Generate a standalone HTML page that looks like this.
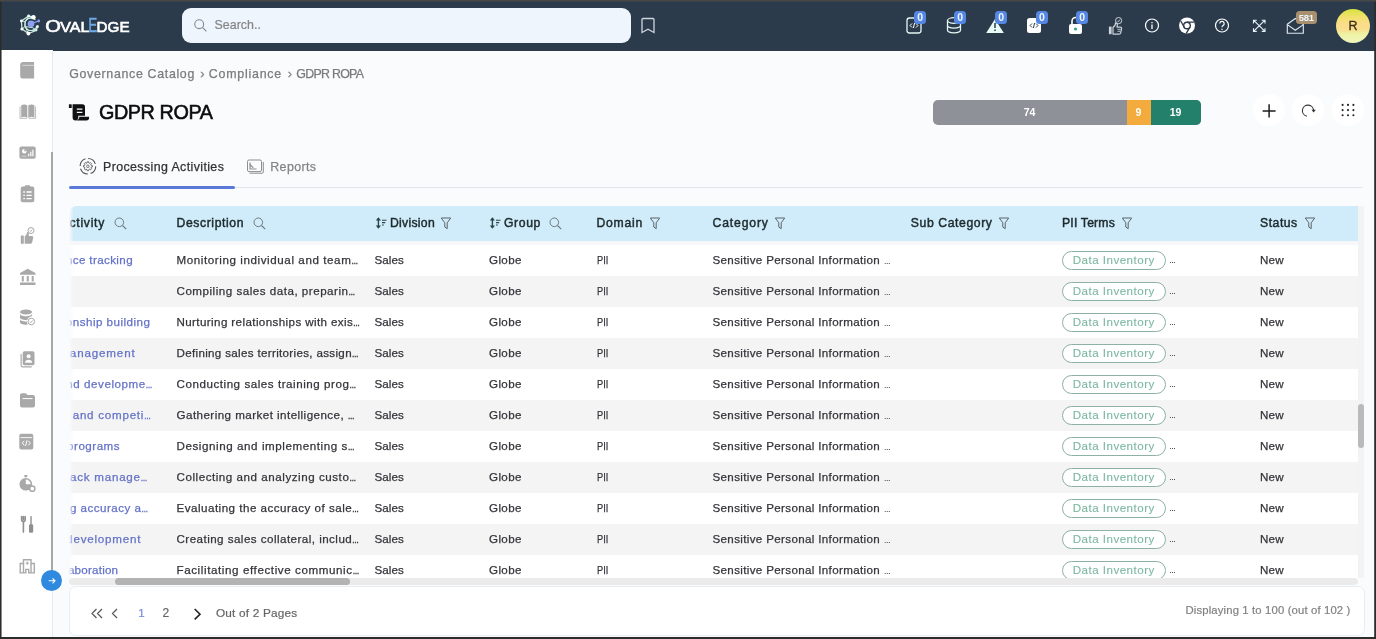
<!DOCTYPE html>
<html lang="en"><head><meta charset="utf-8"><title>GDPR ROPA</title>
<style>
*{box-sizing:border-box;margin:0;padding:0}
html,body{width:1376px;height:639px;overflow:hidden;background:#f9fbfd}
body{font-family:"Liberation Sans",sans-serif;color:#333;font-size:12px}
#app{position:relative;width:1376px;height:639px;overflow:hidden;will-change:transform;opacity:.999}
.frame{position:absolute;left:0;top:0;width:1376px;height:639px;pointer-events:none;z-index:50;box-shadow:inset 1px 0 0 #2c2c2c,inset 2px 0 0 rgba(44,44,44,.55),inset -1px 0 0 #2c2c2c,inset -2px 0 0 rgba(44,44,44,.8),inset 0 -2px 0 #2c2c2c}
.ftop{position:absolute;left:0;top:0;width:1376px;height:2px;background:linear-gradient(#474747 50%,rgba(71,71,71,.5) 50%);z-index:51}
/* header */
.hdr{position:absolute;left:0;top:0;width:1376px;height:50.500px;background:#2b3b4c}
.logo-t{position:absolute;left:45.500px;top:13px;color:#fff;font-size:19.500px;line-height:22px;white-space:nowrap;font-weight:bold}
.logo-t small{font-size:16.500px}
.logo-t b{color:#6aa6e8;font-size:20.500px}
.search{position:absolute;left:182px;top:7.500px;width:449px;height:35px;background:#eef5fc;border-radius:9px}
.ph{-webkit-text-stroke:.2px #858585;position:absolute;left:32.500px;top:10.800px;color:#858585;line-height:15px;white-space:nowrap}
.hi{position:absolute;top:14px;width:22px;height:22px}
.bdg{position:absolute;top:10.900px;width:12.300px;height:13.300px;border-radius:3.500px;background:#5586e4;color:#eef6ff;font-size:10.500px;font-weight:bold;line-height:13.300px;text-align:center}
.avatar{position:absolute;left:1336px;top:8.500px;width:34px;height:34px;border-radius:50%;background:linear-gradient(180deg,#d6e33e 0%,#f0e16a 22%,#fcdc8a 45%,#f9e08f 62%,#edf2a6 74%,#f1f6bd 100%);color:#3a2f1a;font-size:12.500px;line-height:34px;text-align:center;-webkit-text-stroke:.3px #3a2f1a}
/* sidebar */
.side{position:absolute;left:0;top:50px;width:52.500px;height:589px;background:#fff;border-right:1px solid #e6eaee}
.sline{position:absolute;left:51.300px;top:152px;width:2px;height:420px;background:#a6a6a6}
.si{position:absolute;left:18px;width:18px;height:18px}
/* top */
.crumb{-webkit-text-stroke:.25px #7b7b7b;position:absolute;left:69.250px;top:66.800px;color:#7b7b7b;white-space:nowrap;line-height:15px;width:300px;height:15px}
.crumb .sep{position:absolute;top:-1px;font-style:normal;font-size:13px;color:#8a8a8a}
.title{position:absolute;left:98.900px;top:98px;color:#0c0c0c;white-space:nowrap;line-height:28px;-webkit-text-stroke:0.550px #0c0c0c}
.prog{position:absolute;left:932.500px;top:100px;width:268.500px;height:25.400px;border-radius:5px;overflow:hidden;background:#8e9198}
.prog span{position:absolute;top:0;height:25.400px;color:#fff;font-size:10.500px;font-weight:bold;line-height:25.400px;text-align:center}
.cb{position:absolute;top:93.600px;width:32px;height:32px;line-height:0;border-radius:50%;background:#fff}
.tab{-webkit-text-stroke:.25px currentColor;position:absolute;top:158.700px;white-space:nowrap;line-height:17px}
.tabline{position:absolute;left:69px;top:187px;width:1294px;height:1px;background:#e3e6e9}
.tabul{position:absolute;left:69px;top:185.500px;width:166px;height:3.500px;background:#5b79d9;border-radius:2px}
/* table */
.thead{position:absolute;left:69px;top:206.200px;width:1289px;height:34.800px;background:#d0ebf9;overflow:hidden;border-radius:8px 0 0 0}
.th{position:absolute;top:8.700px;font-size:12.200px;font-weight:normal;-webkit-text-stroke:0.450px #1c2a2c;color:#1c2a2c;white-space:nowrap;line-height:16px}
.thi{position:absolute;top:11px;line-height:0}
.tbody{position:absolute;left:69px;top:241px;width:1289px;height:344px;overflow:hidden;background:#f6f7fa}
.row{position:absolute;left:0;width:1289px;height:31px;margin-top:-241px}
.row.odd{background:#fff}
.row.even{background:#f4f4f4}
.c{position:absolute;top:8px;font-size:11.600px;line-height:14px;color:#34343a;white-space:pre;-webkit-text-stroke:.25px currentColor}
.lnk{color:#6472c8}
.pill{position:absolute;left:992.500px;top:6.500px;width:104.500px;height:18.500px;border:1px solid #8db1a6;border-radius:10px;color:#7cb8a1;font-size:11.600px;line-height:16.500px;-webkit-text-stroke:.1px #7cb8a1;text-align:center;background:#fff;white-space:nowrap}
.fade{position:absolute;left:66px;top:200px;width:8px;height:386px;background:linear-gradient(90deg,#f9fbfd 35%,rgba(249,251,253,0))}
.vscroll{position:absolute;left:1358px;top:206px;width:6px;height:372px;background:#f2f3f5}
.vthumb{position:absolute;left:.2px;top:198px;width:5.600px;height:43.500px;background:#bababa;border-radius:3px}
.hscroll{position:absolute;left:69px;top:578px;width:1289px;height:7px;background:#ebebeb;border-radius:4px}
.hthumb{position:absolute;left:46px;top:0;width:235px;height:6.500px;background:#b3b3b3;border-radius:4px}
.pager{position:absolute;left:68.500px;top:586px;width:1296px;height:50px;background:#fff;border:1px solid #e9edf0;border-radius:7px}
.pg{-webkit-text-stroke:.2px currentColor;position:absolute;top:19px;font-size:12px;color:#666;line-height:15px;white-space:nowrap}
.disp{-webkit-text-stroke:.2px #818181;position:absolute;right:13px;top:15.700px;color:#818181;white-space:nowrap;line-height:15px}
.fab{position:absolute;left:40.500px;top:569.500px;width:21.500px;height:21.500px;border-radius:50%;background:#2f8adf;line-height:0}
.el{position:absolute;top:13.500px;font-size:6.500px;font-weight:bold;line-height:8px;color:#444}
.eli{font-size:6.500px;font-weight:bold;letter-spacing:0}

</style></head><body>
<div id="app">
<div class="hdr">
  <svg style="position:absolute;left:0;top:0" width="140" height="50" viewBox="0 0 140 50">
    <g fill="none" stroke="#c9ece2" stroke-linejoin="round">
      <path d="M33.400 17.300L28.600 16 21.400 21 22 29l6.400 4.500 8-3.200 1-3.700" stroke-width="1.300"/>
      <path d="M28.600 16l-3.200 5.500-.3 5 3.300 7M21.400 21l4 .500M22 29l3.100-2.500M25.400 21.500l3-2.800 5-1.400M25.100 26.500l3.300 4 8-.2-3.500-2.500z" stroke-width="1"/>
      <path d="M35.500 19.800a6.300 6.300 0 1 0 1 7.400" stroke-width="1.200"/>
    </g>
    <path d="M31 23.700l7.700-2.700" stroke="#8ea2f4" stroke-width="1.300"/>
    <circle cx="31" cy="23.800" r="3.400" fill="#8ea2f4"/>
    <circle cx="38.700" cy="21" r="1.400" fill="#8ea2f4"/>
    <circle cx="33.400" cy="17.300" r="2.300" fill="#fff"/>
    <circle cx="28.600" cy="16" r="1.400" fill="#f2fffb"/>
    <circle cx="21.400" cy="21" r="1.400" fill="#fff"/>
    <circle cx="22" cy="29" r="1.600" fill="#fff"/>
    <circle cx="28.400" cy="33.500" r="1.900" fill="#fff"/>
    <circle cx="37.400" cy="26.600" r="1.500" fill="#e6fbf5"/>
    <circle cx="36.400" cy="30.300" r="1" fill="#e6fbf5"/>
    <g font-family="Liberation Sans, sans-serif" fill="#fff" stroke="#fff" stroke-width=".650">
      <text x="45.300" y="31.700" font-size="17.400" textLength="15.600" lengthAdjust="spacingAndGlyphs">O</text>
      <text x="60.300" y="31.600" font-size="15.400" textLength="29" lengthAdjust="spacingAndGlyphs">VAL</text>
      <text x="88.600" y="31.600" font-size="19.800" textLength="8.600" lengthAdjust="spacingAndGlyphs" fill="#6fa8e6" stroke="#6fa8e6">E</text>
      <text x="96.600" y="31.600" font-size="15.400" textLength="33" lengthAdjust="spacingAndGlyphs">DGE</text>
    </g>
  </svg>
  <div class="search">
    <svg style="position:absolute;left:11.500px;top:11.800px" width="13" height="13" viewBox="0 0 13 13"><circle cx="5.200" cy="5.200" r="4.400" fill="none" stroke="#858a8f" stroke-width="1.100"/><path d="M8.400 8.400l4 4" stroke="#858a8f" stroke-width="1.200"/></svg>
    <span class="ph"><span style="font-size:12.4px;letter-spacing:0.043px;">Search..</span></span>
  </div>
  <svg style="position:absolute;left:641px;top:17px" width="14" height="17" viewBox="0 0 14 17"><path d="M2 1.500h10a1 1 0 0 1 1 1V15.500l-6-3.200-6 3.200V2.500a1 1 0 0 1 1-1z" fill="none" stroke="#cdd6dd" stroke-width="1.300"/></svg>
  <!-- right icons -->
  <svg class="hi" style="left:904px" viewBox="0 0 22 22"><rect x="3" y="4" width="14" height="15" rx="2.500" fill="none" stroke="#e4f7f2" stroke-width="1.300"/><path d="M8 9.500l-2 2 2 2M12 9.500l2 2-2 2M10.600 9l-1.200 5" fill="none" stroke="#fff" stroke-width="1"/></svg>
  <span class="bdg" style="left:914px">0</span>
  <svg class="hi" style="left:944px" viewBox="0 0 22 22"><ellipse cx="10" cy="6.500" rx="6.500" ry="2.800" fill="none" stroke="#e4f7f2" stroke-width="1.300"/><path d="M3.500 6.500v9.500c0 1.600 2.900 2.800 6.500 2.800s6.500-1.200 6.500-2.800V6.500M3.500 11.300c0 1.600 2.900 2.800 6.500 2.800s6.500-1.200 6.500-2.800" fill="none" stroke="#e4f7f2" stroke-width="1.300"/></svg>
  <span class="bdg" style="left:954px">0</span>
  <svg class="hi" style="left:984px" viewBox="0 0 22 22"><path d="M11 5L19.800 19H2.200z" fill="#e9fbf6"/><path d="M11 9v5M11 15.500v1.500" stroke="#2b3b4c" stroke-width="1.500"/></svg>
  <span class="bdg" style="left:995px">0</span>
  <svg class="hi" style="left:1024px" viewBox="0 0 22 22"><rect x="3" y="4" width="14" height="15" rx="2.500" fill="#fff"/><path d="M8 9.500l-2 2 2 2M12 9.500l2 2-2 2M10.600 9l-1.200 5" fill="none" stroke="#2b3b4c" stroke-width="1"/></svg>
  <span class="bdg" style="left:1035.700px">0</span>
  <svg class="hi" style="left:1065px" viewBox="0 0 22 22"><rect x="4" y="10" width="13" height="10" rx="2" fill="#fff"/><path d="M7 10V7a3.500 3.500 0 0 1 7 0" fill="none" stroke="#fff" stroke-width="1.600"/><circle cx="10.500" cy="15" r="1.600" fill="#3aa58a"/></svg>
  <span class="bdg" style="left:1076px">0</span>
  <svg class="hi" style="left:1105px" viewBox="0 0 22 22"><rect x="3.900" y="12.600" width="2.700" height="7.600" fill="#ccd3d9"/><path d="M8 13.300c1.700-.9 2.500-2.500 2.500-4.400 1.300 0 2 1 1.800 2.400l-.3 1.800h3.400c.9 0 1.400.7 1.200 1.500l-.9 4.200c-.2.800-.8 1.300-1.600 1.300H8z" fill="none" stroke="#ccd3d9" stroke-width="1.200" stroke-linejoin="round"/><path d="M12.500 15.300h3.200M12.500 17.300h2.800" stroke="#ccd3d9" stroke-width=".900" fill="none"/><circle cx="13.600" cy="6.600" r="3.100" fill="#2b3b4c" stroke="#ccd3d9" stroke-width="1"/><path d="M12.300 6.700l1 1 1.600-2" fill="none" stroke="#ccd3d9" stroke-width="1"/></svg>
  <svg class="hi" style="left:1141px" viewBox="0 0 22 22"><circle cx="11" cy="11.500" r="6.500" fill="none" stroke="#fff" stroke-width="1.200"/><path d="M11 10.500v4.500M11 8v1.200" stroke="#fff" stroke-width="1.300"/></svg>
  <svg class="hi" style="left:1176px" viewBox="0 0 22 22"><circle cx="11" cy="11.500" r="8" fill="#fff"/><circle cx="11" cy="11.500" r="3.300" fill="#fff" stroke="#2b3b4c" stroke-width="1.400"/><path d="M11 8.200h7.200M8.200 13.200L4.600 6.800M13.900 13.200l-3.600 6.200" stroke="#2b3b4c" stroke-width="1.300"/></svg>
  <svg class="hi" style="left:1211px" viewBox="0 0 22 22"><circle cx="11" cy="11.500" r="6.500" fill="none" stroke="#fff" stroke-width="1.200"/><path d="M8.800 9.600a2.200 2.200 0 1 1 3.200 2c-.7.400-1 .8-1 1.600M11 14.800v1.200" fill="none" stroke="#fff" stroke-width="1.200"/></svg>
  <svg class="hi" style="left:1248px" viewBox="0 0 22 22"><path d="M5.500 6.200l11.500 11.200M17 6.200L5.500 17.400M5.500 9.400V6.200h3.300M13.700 6.200H17v3.200M17 14.200v3.200h-3.300M8.800 17.400H5.500v-3.200" fill="none" stroke="#e3f0f4" stroke-width="1.150"/></svg>
  <svg class="hi" style="left:1284px" viewBox="0 0 22 22"><path d="M3.300 10.300l8-5.800 8 5.800v8.900h-16z" fill="none" stroke="#dfe8ee" stroke-width="1.150"/><path d="M3.300 10.600l8 5.600 8-5.600" fill="none" stroke="#dfe8ee" stroke-width="1.150"/></svg>
  <span class="bdg" style="left:1295.500px;background:#a8906f;width:21.500px;font-size:9.500px;letter-spacing:-.3px">581</span>
  <div class="avatar">R</div>
</div>

<div class="side"></div>
<svg style="position:absolute;left:0;top:50px" width="52" height="589" viewBox="0 50 52 589">
<g fill="#a9a9a9" stroke="none">
  <!-- 1 closed book -->
  <path d="M20.200 65a2.900 2.900 0 0 1 2.900-2.900H34.100V78.600H22.700a2.500 2.500 0 0 1-2.500-2.500z"/>
  <path d="M22.500 65.300H34.100" stroke="#e4e4e4" stroke-width=".800" fill="none"/>
  <!-- 2 open book -->
  <path d="M21.200 105.300c2.100-1.200 4.400-1.100 6.100.3v12.300c-1.700-1.300-4-1.400-6.100-.4zM34.400 105.300c-2.100-1.200-4.400-1.100-6.100.3v12.300c1.700-1.300 4-1.400 6.100-.4z"/>
  <path d="M20 106.500v11.800h6.800M35.600 106.500v11.800h-6.800" fill="none" stroke="#a9a9a9" stroke-width=".800"/>
  <!-- 3 dashboard -->
  <rect x="19.400" y="146.500" width="16.300" height="12.300" rx="2"/>
  <circle cx="24.300" cy="151.200" r="2.300" fill="#fff"/>
  <path d="M24.300 151.200v-2.300a2.300 2.300 0 0 1 2.300 2.300z" fill="#a9a9a9"/>
  <path d="M28.700 156.200v-2.500M30.800 156.200v-4.500M32.900 156.200v-6.500" stroke="#fff" stroke-width="1.200" fill="none"/>
  <path d="M21.500 156.200h5" stroke="#d9d9d9" stroke-width=".800" fill="none"/>
  <!-- 4 clipboard -->
  <rect x="20.700" y="186.600" width="13.600" height="15.600" rx="2"/>
  <rect x="24.700" y="185.200" width="5.600" height="3.200" rx="1.200"/>
  <path d="M23.300 192h1.600M26.500 192h5.200M23.300 195.300h1.600M26.500 195.300h5.200M23.300 198.600h1.600M26.500 198.600h5.200" stroke="#fff" stroke-width="1.300" fill="none"/>
  <!-- 5 thumb + check -->
  <rect x="20.800" y="235.400" width="3" height="8.300" rx=".500"/>
  <path d="M24.700 236.200c1.500-.8 2.300-2.300 2.300-4.200 1.400 0 2.100 1.100 1.900 2.600l-.2 1.300h3.300c.9 0 1.400.8 1.200 1.600l-1 4.800c-.2.800-.8 1.400-1.600 1.400h-5.900z"/>
  <circle cx="31" cy="230.500" r="3" fill="#fff" stroke="#a9a9a9" stroke-width="1"/>
  <path d="M29.700 230.500l1 1 1.600-1.900" fill="none" stroke="#a9a9a9" stroke-width=".900"/>
  <!-- 6 bank -->
  <path d="M27.750 268.700l7.750 4.300v1.700H20v-1.700zM21.800 276h2v5.500h-2zM26.750 276h2v5.500h-2zM31.700 276h2v5.500h-2zM20 282.600h15.500V285H20z"/>
  <!-- 7 db + check -->
  <ellipse cx="26" cy="312" rx="6" ry="2.500"/>
  <path d="M20 313.700c0 1.400 2.700 2.500 6 2.500s6-1.100 6-2.500v2.600c-2.300.2-4.100 1.600-4.800 3.600-.4 0-.8.100-1.200.1-3.300 0-6-1.100-6-2.500zM20 318.900c0 1.400 2.700 2.500 6 2.500h.9c0 1.200.4 2.300 1.100 3.200-.6.100-1.300.1-2 .1-3.300 0-6-1.100-6-2.500z"/>
  <circle cx="31.300" cy="321.500" r="3.300" fill="#fff" stroke="#a9a9a9" stroke-width="1"/>
  <path d="M29.800 321.500l1.100 1.100 1.800-2.100" fill="none" stroke="#a9a9a9" stroke-width="1"/>
  <!-- 8 contact -->
  <path d="M21.100 354v11.200c0 .9.700 1.600 1.600 1.600h9" fill="none" stroke="#a9a9a9" stroke-width="1.200"/>
  <rect x="22.700" y="351.300" width="11.800" height="14" rx="1.800"/>
  <circle cx="28.600" cy="356.200" r="2" fill="#fff"/>
  <path d="M25 362.800c0-2 1.600-3 3.600-3s3.600 1 3.600 3z" fill="#fff"/>
  <!-- 9 folder -->
  <path d="M20 395.200c0-1.100.9-2 2-2h3.800l1.700 1.900H33c1.100 0 2 .9 2 2v8.400c0 1.100-.9 2-2 2H22c-1.100 0-2-.9-2-2z"/>
  <path d="M22.500 398.600h10" stroke="#fff" stroke-width="1" fill="none"/>
  <!-- 10 code window -->
  <rect x="19.300" y="433.800" width="14" height="15.600" rx="2"/>
  <path d="M20.500 437.600h11.600" stroke="#fff" stroke-width=".900" fill="none"/>
  <path d="M24.300 440.800l-2 2.300 2 2.300M28.300 440.800l2 2.300-2 2.300M27 440.300l-1.500 5.600" fill="none" stroke="#fff" stroke-width="1"/>
  <!-- 11 stopwatch + gear -->
  <circle cx="25.800" cy="484.300" r="6.300"/>
  <rect x="24.300" y="475" width="3" height="2.200" rx=".600"/>
  <path d="M25.800 484.300v-4.800a4.800 4.800 0 0 1 4.800 4.800z" fill="#fff"/>
  <circle cx="32.300" cy="488.700" r="2.600" fill="#fff" stroke="#a9a9a9" stroke-width="1.500"/>
  <!-- 12 tools -->
  <path d="M23.400 516.600v3.200M21.600 516.600v3c0 1.200.8 2 1.800 2s1.800-.8 1.800-2v-3M23.400 521.600v10.500" fill="none" stroke="#8f8f8f" stroke-width="1.600" stroke-linecap="round"/>
  <path d="M31 516.600v8" stroke="#8f8f8f" stroke-width="1.400" fill="none" stroke-linecap="round"/>
  <rect x="29" y="524.300" width="4.200" height="8.400" rx="1.300" fill="#8f8f8f"/>
  <!-- 13 hospital -->
  <path d="M20.200 563.500h3.300v9.400h-3.300zM31 563.500h3.300v9.400H31zM23.500 559.700h7.500v13.200h-2.300v-3.500h-2.900v3.500h-2.300z" fill="none" stroke="#a9a9a9" stroke-width="1.400"/>
  <path d="M27.250 561.600v3.200M25.650 563.200h3.200" stroke="#a9a9a9" stroke-width="1.100" fill="none"/>
</g>
</svg>
<div class="sline"></div>

<div class="crumb"><span style="font-size:12.4px;letter-spacing:0.672px;">Governance Catalog</span><i class="sep" style="left:131px">›</i><span style="font-size:12.4px;letter-spacing:0.781px;position:absolute;left:139.500px">Compliance</span><i class="sep" style="left:218.500px">›</i><span style="font-size:12.4px;letter-spacing:-0.715px;position:absolute;left:227px">GDPR ROPA</span></div>
<svg style="position:absolute;left:60px;top:100px" width="34" height="24" viewBox="60 100 34 24"><path d="M68.900 104.300h2.800v3.700h-2.800z" fill="#111"/><path d="M72.600 104.300H82.400a2.600 2.600 0 0 1 2.600 2.600V115.700H78.300v1.900a2.850 2.850 0 0 1-5.700 0z" fill="#111"/><path d="M79.300 116.700H89.100v1a2.700 2.700 0 0 1-2.700 2.700H76.200c1.900-.3 3.100-1.500 3.100-3.700z" fill="#111"/><path d="M76.800 109.200h5.600M76.800 112.300h5.600" stroke="#f9fbfd" stroke-width="1.300" fill="none"/></svg>
<div class="title"><span style="font-size:19.8px;letter-spacing:-0.394px;">GDPR ROPA</span></div>
<div class="prog"><span style="left:0;width:194px">74</span><span style="left:194px;width:24px;background:#f2ab3c">9</span><span style="left:218px;width:50px;background:#23806a">19</span></div>
<div class="cb" style="left:1252.900px"><svg width="32" height="32" viewBox="0 0 32 32"><path d="M16.100 10.300v13.200M9.600 16.900h13" stroke="#1d1d1d" stroke-width="1.500"/></svg></div>
<div class="cb" style="left:1292.400px"><svg width="32" height="32" viewBox="0 0 32 32"><path d="M14.900 22.200A5.600 5.600 0 1 1 21.600 16.600" fill="none" stroke="#333" stroke-width="1.100"/><path d="M19.500 15.700h4.300l-2.200 2.800z" fill="#333"/></svg></div>
<div class="cb" style="left:1332.200px"><svg width="32" height="32" viewBox="0 0 32 32"><g fill="#222"><circle cx="10.600" cy="10.900" r="1.050"/><circle cx="16" cy="10.900" r="1.050"/><circle cx="21.400" cy="10.900" r="1.050"/><circle cx="10.600" cy="16.100" r="1.050"/><circle cx="16" cy="16.100" r="1.050"/><circle cx="21.400" cy="16.100" r="1.050"/><circle cx="10.600" cy="21.300" r="1.050"/><circle cx="16" cy="21.300" r="1.050"/><circle cx="21.400" cy="21.300" r="1.050"/></g></svg></div>
<svg style="position:absolute;left:78px;top:156px" width="20" height="20" viewBox="78 156 20 20"><circle cx="87.900" cy="166.250" r="7.800" fill="none" stroke="#555" stroke-width="1.100" stroke-dasharray="9.500 2.750"/><path d="M87.20 161.81L88.60 161.81L88.72 162.85L89.73 163.27L90.55 162.61L91.54 163.60L90.88 164.42L91.30 165.43L92.34 165.55L92.34 166.95L91.30 167.07L90.88 168.08L91.54 168.90L90.55 169.89L89.73 169.23L88.72 169.65L88.60 170.69L87.20 170.69L87.08 169.65L86.07 169.23L85.25 169.89L84.26 168.90L84.92 168.08L84.50 167.07L83.46 166.95L83.46 165.55L84.50 165.43L84.92 164.42L84.26 163.60L85.25 162.61L86.07 163.27L87.08 162.85z" fill="none" stroke="#5a5a5a" stroke-width=".900" stroke-linejoin="round"/><circle cx="87.900" cy="166.250" r="1.300" fill="none" stroke="#5a5a5a" stroke-width=".800"/></svg>
<div class="tab" style="left:103px;color:#333"><span style="font-size:12.4px;letter-spacing:0.396px;">Processing Activities</span></div>
<svg style="position:absolute;left:246px;top:158px" width="19" height="17" viewBox="246 158 19 17"><path d="M249.500 173.200h12.500a1.300 1.300 0 0 0 1.300-1.300V162" fill="none" stroke="#8d8d8d" stroke-width="1"/><rect x="247.500" y="160" width="14" height="11.600" rx="1.500" fill="#fbfcfd" stroke="#8d8d8d" stroke-width="1"/><path d="M250 162.500v6.500h6.500M250 164.500l3.300 3.300" fill="none" stroke="#8d8d8d" stroke-width="1.200"/></svg>
<div class="tab" style="left:270.300px;color:#848484"><span style="font-size:12.4px;letter-spacing:0.373px;">Reports</span></div>
<div class="tabline"></div>
<div class="tabul"></div>

<div class="thead"><span class="th" style="left:0.5px;letter-spacing:0.719px">ctivity</span><span class="thi" style="left:44.5px"><svg width="13" height="13" viewBox="0 0 13 13"><circle cx="5.300" cy="5.300" r="4.300" fill="none" stroke="#6d7a80" stroke-width="1"/><path d="M8.500 8.500l3.700 3.700" stroke="#6d7a80" stroke-width="1.100"/></svg></span><span class="th" style="left:107.5px;letter-spacing:0.603px">Description</span><span class="thi" style="left:183.5px"><svg width="13" height="13" viewBox="0 0 13 13"><circle cx="5.300" cy="5.300" r="4.300" fill="none" stroke="#6d7a80" stroke-width="1"/><path d="M8.500 8.500l3.700 3.700" stroke="#6d7a80" stroke-width="1.100"/></svg></span><span class="thi" style="left:306.3px"><svg width="12" height="12" viewBox="0 0 12 12"><path d="M3.400 1.200v9.600" fill="none" stroke="#2c4548" stroke-width="1.400"/><path d="M3.400 .2L6 3.400H.8zM3.400 11.800L6 8.600H.8z" fill="#2c4548"/><path d="M7 3.200h4.500M7 5.600h3.200M7 8h1.800" stroke="#2c4548" stroke-width="1.100"/></svg></span><span class="th" style="left:321.0px;letter-spacing:0.291px">Division</span><span class="thi" style="left:372.0px"><svg width="11" height="13" viewBox="0 0 11 13"><path d="M.3 1h9.400L6.200 5.800v5.900L3.800 10V5.800z" fill="none" stroke="#5a6468" stroke-width="1" stroke-linejoin="round"/></svg></span><span class="thi" style="left:420.3px"><svg width="12" height="12" viewBox="0 0 12 12"><path d="M3.400 1.200v9.600" fill="none" stroke="#2c4548" stroke-width="1.400"/><path d="M3.400 .2L6 3.400H.8zM3.400 11.800L6 8.600H.8z" fill="#2c4548"/><path d="M7 3.200h4.500M7 5.600h3.200M7 8h1.800" stroke="#2c4548" stroke-width="1.100"/></svg></span><span class="th" style="left:435.0px;letter-spacing:0.625px">Group</span><span class="thi" style="left:480.0px"><svg width="13" height="13" viewBox="0 0 13 13"><circle cx="5.300" cy="5.300" r="4.300" fill="none" stroke="#6d7a80" stroke-width="1"/><path d="M8.500 8.500l3.700 3.700" stroke="#6d7a80" stroke-width="1.100"/></svg></span><span class="th" style="left:527.5px;letter-spacing:0.75px">Domain</span><span class="thi" style="left:581.0px"><svg width="11" height="13" viewBox="0 0 11 13"><path d="M.3 1h9.400L6.200 5.800v5.900L3.800 10V5.800z" fill="none" stroke="#5a6468" stroke-width="1" stroke-linejoin="round"/></svg></span><span class="th" style="left:643.5px;letter-spacing:0.85px">Category</span><span class="thi" style="left:706.0px"><svg width="11" height="13" viewBox="0 0 11 13"><path d="M.3 1h9.400L6.200 5.800v5.900L3.800 10V5.800z" fill="none" stroke="#5a6468" stroke-width="1" stroke-linejoin="round"/></svg></span><span class="th" style="left:841.8px;letter-spacing:0.602px">Sub Category</span><span class="thi" style="left:930.0px"><svg width="11" height="13" viewBox="0 0 11 13"><path d="M.3 1h9.400L6.200 5.800v5.900L3.800 10V5.800z" fill="none" stroke="#5a6468" stroke-width="1" stroke-linejoin="round"/></svg></span><span class="th" style="left:993.0px;letter-spacing:0.194px">PII Terms</span><span class="thi" style="left:1053.0px"><svg width="11" height="13" viewBox="0 0 11 13"><path d="M.3 1h9.400L6.200 5.800v5.900L3.800 10V5.800z" fill="none" stroke="#5a6468" stroke-width="1" stroke-linejoin="round"/></svg></span><span class="th" style="left:1191.0px;letter-spacing:0.531px">Status</span><span class="thi" style="left:1235.5px"><svg width="11" height="13" viewBox="0 0 11 13"><path d="M.3 1h9.400L6.200 5.800v5.900L3.800 10V5.800z" fill="none" stroke="#5a6468" stroke-width="1" stroke-linejoin="round"/></svg></span></div>
<div class="tbody">
<div class="row odd" style="top:244.5px"><span class="c lnk" style="left:-9.9px;letter-spacing:0.376px">ance tracking</span><span class="c" style="left:107.5px;letter-spacing:0.588px;">Monitoring individual and team<span class="eli">…</span></span><span class="c" style="left:305.5px;letter-spacing:0.047px;">Sales</span><span class="c" style="left:420.0px;letter-spacing:0.362px;">Globe</span><span class="c" style="left:527.5px;transform:scaleX(0.796);transform-origin:0 50%">PII</span><span class="c" style="left:643.5px;letter-spacing:0.342px;">Sensitive Personal Information</span><span class="el" style="left:815px">…</span><span class="pill" style="letter-spacing:0.471px">Data Inventory</span><span class="el" style="left:1100.300px;top:12.700px">…</span><span class="c" style="left:1191.0px;letter-spacing:0.182px;">New</span></div>
<div class="row even" style="top:275.5px"><span class="c" style="left:107.5px;letter-spacing:0.513px;">Compiling sales data, preparin<span class="eli">…</span></span><span class="c" style="left:305.5px;letter-spacing:0.047px;">Sales</span><span class="c" style="left:420.0px;letter-spacing:0.362px;">Globe</span><span class="c" style="left:527.5px;transform:scaleX(0.796);transform-origin:0 50%">PII</span><span class="c" style="left:643.5px;letter-spacing:0.342px;">Sensitive Personal Information</span><span class="el" style="left:815px">…</span><span class="pill" style="letter-spacing:0.471px">Data Inventory</span><span class="el" style="left:1100.300px;top:12.700px">…</span><span class="c" style="left:1191.0px;letter-spacing:0.182px;">New</span></div>
<div class="row odd" style="top:306.5px"><span class="c lnk" style="left:-6.2px;letter-spacing:0.478px">ionship building</span><span class="c" style="left:107.5px;letter-spacing:0.395px;">Nurturing relationships with exis<span class="eli">…</span></span><span class="c" style="left:305.5px;letter-spacing:0.047px;">Sales</span><span class="c" style="left:420.0px;letter-spacing:0.362px;">Globe</span><span class="c" style="left:527.5px;transform:scaleX(0.796);transform-origin:0 50%">PII</span><span class="c" style="left:643.5px;letter-spacing:0.342px;">Sensitive Personal Information</span><span class="el" style="left:815px">…</span><span class="pill" style="letter-spacing:0.471px">Data Inventory</span><span class="el" style="left:1100.300px;top:12.700px">…</span><span class="c" style="left:1191.0px;letter-spacing:0.182px;">New</span></div>
<div class="row even" style="top:337.5px"><span class="c lnk" style="left:-9.7px;letter-spacing:0.854px">management</span><span class="c" style="left:107.5px;letter-spacing:0.326px;">Defining sales territories, assign<span class="eli">…</span></span><span class="c" style="left:305.5px;letter-spacing:0.047px;">Sales</span><span class="c" style="left:420.0px;letter-spacing:0.362px;">Globe</span><span class="c" style="left:527.5px;transform:scaleX(0.796);transform-origin:0 50%">PII</span><span class="c" style="left:643.5px;letter-spacing:0.342px;">Sensitive Personal Information</span><span class="el" style="left:815px">…</span><span class="pill" style="letter-spacing:0.471px">Data Inventory</span><span class="el" style="left:1100.300px;top:12.700px">…</span><span class="c" style="left:1191.0px;letter-spacing:0.182px;">New</span></div>
<div class="row odd" style="top:368.5px"><span class="c lnk" style="left:-9.7px;letter-spacing:0.555px">and developme<span class="eli">…</span></span><span class="c" style="left:107.5px;letter-spacing:0.546px;">Conducting sales training prog<span class="eli">…</span></span><span class="c" style="left:305.5px;letter-spacing:0.047px;">Sales</span><span class="c" style="left:420.0px;letter-spacing:0.362px;">Globe</span><span class="c" style="left:527.5px;transform:scaleX(0.796);transform-origin:0 50%">PII</span><span class="c" style="left:643.5px;letter-spacing:0.342px;">Sensitive Personal Information</span><span class="el" style="left:815px">…</span><span class="pill" style="letter-spacing:0.471px">Data Inventory</span><span class="el" style="left:1100.300px;top:12.700px">…</span><span class="c" style="left:1191.0px;letter-spacing:0.182px;">New</span></div>
<div class="row even" style="top:399.5px"><span class="c lnk" style="left:-7.5px;letter-spacing:0.757px">e and competi<span class="eli">…</span></span><span class="c" style="left:107.5px;letter-spacing:0.456px;">Gathering market intelligence, <span class="eli">…</span></span><span class="c" style="left:305.5px;letter-spacing:0.047px;">Sales</span><span class="c" style="left:420.0px;letter-spacing:0.362px;">Globe</span><span class="c" style="left:527.5px;transform:scaleX(0.796);transform-origin:0 50%">PII</span><span class="c" style="left:643.5px;letter-spacing:0.342px;">Sensitive Personal Information</span><span class="el" style="left:815px">…</span><span class="pill" style="letter-spacing:0.471px">Data Inventory</span><span class="el" style="left:1100.300px;top:12.700px">…</span><span class="c" style="left:1191.0px;letter-spacing:0.182px;">New</span></div>
<div class="row odd" style="top:430.5px"><span class="c lnk" style="left:-1.9px;letter-spacing:0.496px">programs</span><span class="c" style="left:107.5px;letter-spacing:0.574px;">Designing and implementing s<span class="eli">…</span></span><span class="c" style="left:305.5px;letter-spacing:0.047px;">Sales</span><span class="c" style="left:420.0px;letter-spacing:0.362px;">Globe</span><span class="c" style="left:527.5px;transform:scaleX(0.796);transform-origin:0 50%">PII</span><span class="c" style="left:643.5px;letter-spacing:0.342px;">Sensitive Personal Information</span><span class="el" style="left:815px">…</span><span class="pill" style="letter-spacing:0.471px">Data Inventory</span><span class="el" style="left:1100.300px;top:12.700px">…</span><span class="c" style="left:1191.0px;letter-spacing:0.182px;">New</span></div>
<div class="row even" style="top:461.5px"><span class="c lnk" style="left:-6.3px;letter-spacing:0.773px">back manage<span class="eli">…</span></span><span class="c" style="left:107.5px;letter-spacing:0.542px;">Collecting and analyzing custo<span class="eli">…</span></span><span class="c" style="left:305.5px;letter-spacing:0.047px;">Sales</span><span class="c" style="left:420.0px;letter-spacing:0.362px;">Globe</span><span class="c" style="left:527.5px;transform:scaleX(0.796);transform-origin:0 50%">PII</span><span class="c" style="left:643.5px;letter-spacing:0.342px;">Sensitive Personal Information</span><span class="el" style="left:815px">…</span><span class="pill" style="letter-spacing:0.471px">Data Inventory</span><span class="el" style="left:1100.300px;top:12.700px">…</span><span class="c" style="left:1191.0px;letter-spacing:0.182px;">New</span></div>
<div class="row odd" style="top:492.5px"><span class="c lnk" style="left:-6.0px;letter-spacing:0.48px">ng accuracy a<span class="eli">…</span></span><span class="c" style="left:107.5px;letter-spacing:0.491px;">Evaluating the accuracy of sale<span class="eli">…</span></span><span class="c" style="left:305.5px;letter-spacing:0.047px;">Sales</span><span class="c" style="left:420.0px;letter-spacing:0.362px;">Globe</span><span class="c" style="left:527.5px;transform:scaleX(0.796);transform-origin:0 50%">PII</span><span class="c" style="left:643.5px;letter-spacing:0.342px;">Sensitive Personal Information</span><span class="el" style="left:815px">…</span><span class="pill" style="letter-spacing:0.471px">Data Inventory</span><span class="el" style="left:1100.300px;top:12.700px">…</span><span class="c" style="left:1191.0px;letter-spacing:0.182px;">New</span></div>
<div class="row even" style="top:523.5px"><span class="c lnk" style="left:-2.7px;letter-spacing:0.765px">development</span><span class="c" style="left:107.5px;letter-spacing:0.462px;">Creating sales collateral, includ<span class="eli">…</span></span><span class="c" style="left:305.5px;letter-spacing:0.047px;">Sales</span><span class="c" style="left:420.0px;letter-spacing:0.362px;">Globe</span><span class="c" style="left:527.5px;transform:scaleX(0.796);transform-origin:0 50%">PII</span><span class="c" style="left:643.5px;letter-spacing:0.342px;">Sensitive Personal Information</span><span class="el" style="left:815px">…</span><span class="pill" style="letter-spacing:0.471px">Data Inventory</span><span class="el" style="left:1100.300px;top:12.700px">…</span><span class="c" style="left:1191.0px;letter-spacing:0.182px;">New</span></div>
<div class="row odd" style="top:554.5px"><span class="c lnk" style="left:-6.7px;letter-spacing:0.224px">llaboration</span><span class="c" style="left:107.5px;letter-spacing:0.598px;">Facilitating effective communic<span class="eli">…</span></span><span class="c" style="left:305.5px;letter-spacing:0.047px;">Sales</span><span class="c" style="left:420.0px;letter-spacing:0.362px;">Globe</span><span class="c" style="left:527.5px;transform:scaleX(0.796);transform-origin:0 50%">PII</span><span class="c" style="left:643.5px;letter-spacing:0.342px;">Sensitive Personal Information</span><span class="el" style="left:815px">…</span><span class="pill" style="letter-spacing:0.471px">Data Inventory</span><span class="el" style="left:1100.300px;top:12.700px">…</span><span class="c" style="left:1191.0px;letter-spacing:0.182px;">New</span></div>

</div>
<div class="fade"></div>
<div class="vscroll"><div class="vthumb"></div></div>
<div class="hscroll"><div class="hthumb"></div></div>
<div class="pager">
  <svg style="position:absolute;left:21px;top:21.200px" width="28" height="11" viewBox="0 0 28 11"><path d="M5.500 1L1 5.500 5.500 10M11 1L6.500 5.500 11 10M26 1l-4.500 4.500L26 10" fill="none" stroke="#555" stroke-width="1.200"/></svg>
  <span class="pg" style="left:68.800px;color:#7a88d6;font-size:11.500px">1</span>
  <span class="pg" style="left:93px">2</span>
  <svg style="position:absolute;left:122px;top:20px" width="10" height="14" viewBox="0 0 10 14"><path d="M2.700 2L8 7.200l-5.300 5.200" fill="none" stroke="#222" stroke-width="1.600"/></svg>
  <span class="pg" style="left:146.500px;color:#666"><span style="font-size:11.8px;letter-spacing:0.182px;">Out of 2 Pages</span></span>
  <span class="disp"><span style="font-size:11.3px;letter-spacing:0.147px;">Displaying 1 to 100 (out of 102 )</span></span>
</div>
<div class="fab"><svg width="22" height="22" viewBox="0 0 22 22"><path d="M7.700 10.800h6.300M11.500 8.300l2.500 2.500-2.500 2.500" fill="none" stroke="#fff" stroke-width="1.100"/></svg></div>
<div class="frame"></div><div class="ftop"></div>
</div>
</body></html>
